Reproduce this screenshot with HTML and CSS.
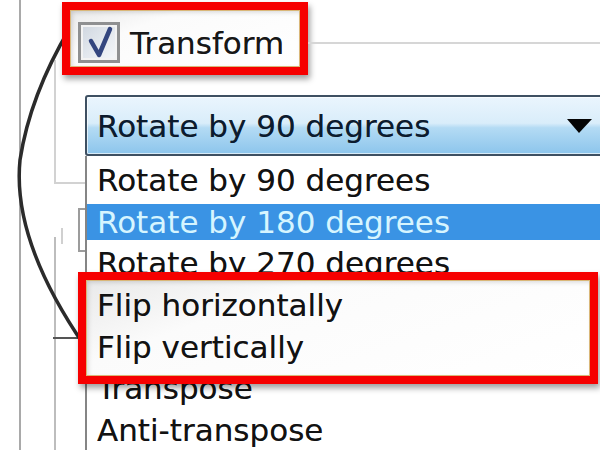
FILE: index.html
```html
<!DOCTYPE html>
<html>
<head>
<meta charset="utf-8">
<link rel="stylesheet" href="styles.css">
</head>
<body>
<div class="screen">
  <svg class="backdrop" width="600" height="450" viewBox="0 0 600 450">
    <line x1="20" y1="0" x2="20" y2="450" stroke="#a9a9a9" stroke-width="2"/>
    <polyline points="55,60 55,183 86,183" fill="none" stroke="#d2d2d2" stroke-width="2"/>
    <line x1="55" y1="237" x2="55" y2="450" stroke="#bdbdbd" stroke-width="2"/>
    <line x1="62" y1="228" x2="62" y2="244" stroke="#d0d0d0" stroke-width="2"/>
    <rect x="79" y="209" width="10" height="42" fill="none" stroke="#9c9c9c" stroke-width="2"/>
    <line x1="53" y1="338" x2="80" y2="338" stroke="#555" stroke-width="2"/>
    <path d="M70,28 Q30,95 20,160 Q12,240 84,345" fill="none" stroke="#2b2b2b" stroke-width="3.5"/>
  </svg>

  <div class="header">
    <div class="callout legend">
      <span class="checkbox">
        <svg width="36" height="35" viewBox="0 0 36 35">
          <path d="M10,16 L18,30 L29,4" fill="none" stroke="#34467f" stroke-width="4.5" stroke-linejoin="round" stroke-linecap="round"/>
        </svg>
      </span>
      <span class="legend-text">Transform</span>
    </div>
    <div class="group-line"></div>
  </div>

  <div class="combo">
    <span class="combo-text">Rotate by 90 degrees</span>
    <span class="combo-arrow"></span>
  </div>

  <ul class="list">
    <li class="item">Rotate by 90 degrees</li>
    <li class="item selected">Rotate by 180 degrees</li>
    <li class="item">Rotate by 270 degrees</li>
    <li class="callout flips">
      <ul class="sublist">
        <li class="item">Flip horizontally</li>
        <li class="item">Flip vertically</li>
      </ul>
    </li>
    <li class="item">Transpose</li>
    <li class="item">Anti-transpose</li>
  </ul>
</div>
</body>
</html>
```

FILE: styles.css
```css
html, body {
  margin: 0;
  padding: 0;
  background: #fff;
}

.screen {
  position: relative;
  z-index: 0;
  width: 600px;
  height: 450px;
  overflow: hidden;
  background: #fff;
  font-family: "DejaVu Sans", "Noto Sans", sans-serif;
  font-size: 31px;
  color: #151515;
  text-shadow: 0 0 0.6px rgba(0, 0, 0, 0.45);
}

.backdrop {
  position: absolute;
  left: 0;
  top: 0;
  z-index: -1;
}

/* red annotation frames */
.callout {
  box-sizing: border-box;
  border: 8px solid #f60000;
  background: linear-gradient(160deg, #e9e9e9 0%, #fbfbfb 30%, #ffffff 100%);
  box-shadow: 2px 4px 6px rgba(0, 0, 0, 0.38),
              inset 0 0 0 1px #d9b778,
              inset 2px 2px 5px rgba(0, 0, 0, 0.16);
}

.header {
  display: flex;
  align-items: flex-start;
  padding: 2px 0 0 62px;
}

.legend {
  width: 246px;
  height: 73px;
  display: flex;
  align-items: center;
  gap: 10px;
  padding: 8px 0 0 8px;
  flex: none;
}

.checkbox {
  box-sizing: border-box;
  width: 42px;
  height: 41px;
  border: 3px solid #8f9091;
  background: linear-gradient(135deg, #cfd6df 0%, #e3e8ee 50%, #f6f7f9 100%);
  box-shadow: inset 0 0 0 2px #f3f3f3;
  display: flex;
  align-items: center;
  justify-content: center;
  flex: none;
}

.checkbox svg {
  display: block;
}

.legend-text {
  white-space: nowrap;
  color: #171717;
}

.group-line {
  flex: 1;
  margin-top: 40px;
  border-top: 2px solid #d6d6d6;
}

/* combo box */
.combo {
  box-sizing: border-box;
  margin: 20px 0 0 85px;
  width: 521px;
  height: 61px;
  border: 2px solid #3e5062;
  border-radius: 3px;
  background: linear-gradient(to bottom, #eaf5fd 0%, #d9edfa 46%, #b4dbf4 54%, #8cc5ec 100%);
  box-shadow: inset 0 0 0 1px rgba(255, 255, 255, 0.65);
  display: flex;
  align-items: center;
  padding-left: 10px;
}

.combo-text {
  flex: 1;
  white-space: nowrap;
  color: #0c1b2e;
}

.combo-arrow {
  width: 0;
  height: 0;
  border-left: 12px solid transparent;
  border-right: 13px solid transparent;
  border-top: 14px solid #050505;
  margin-right: 12px;
  flex: none;
}

/* drop-down list */
.list {
  box-sizing: border-box;
  list-style: none;
  margin: 0 0 0 85px;
  padding: 4px 0 0 0;
  width: 515px;
  height: 300px;
  border-left: 2px solid #858585;
  background: #fff;
}

.sublist {
  list-style: none;
  margin: 0;
  padding: 0;
}

.item {
  height: 41.7px;
  line-height: 41.7px;
  padding-left: 10px;
  white-space: nowrap;
  color: #121212;
}

.selected {
  background: #3a93e4;
  color: #d6f5ff;
  text-shadow: none;
  box-shadow: inset 0 2px 0 #fff, inset 0 -3px 0 #fff;
}

.flips {
  position: relative;
  z-index: 1;
  margin: -13px 2px -15.6px -9px;
  padding: 5px 0 7.6px 1px;
}
```
